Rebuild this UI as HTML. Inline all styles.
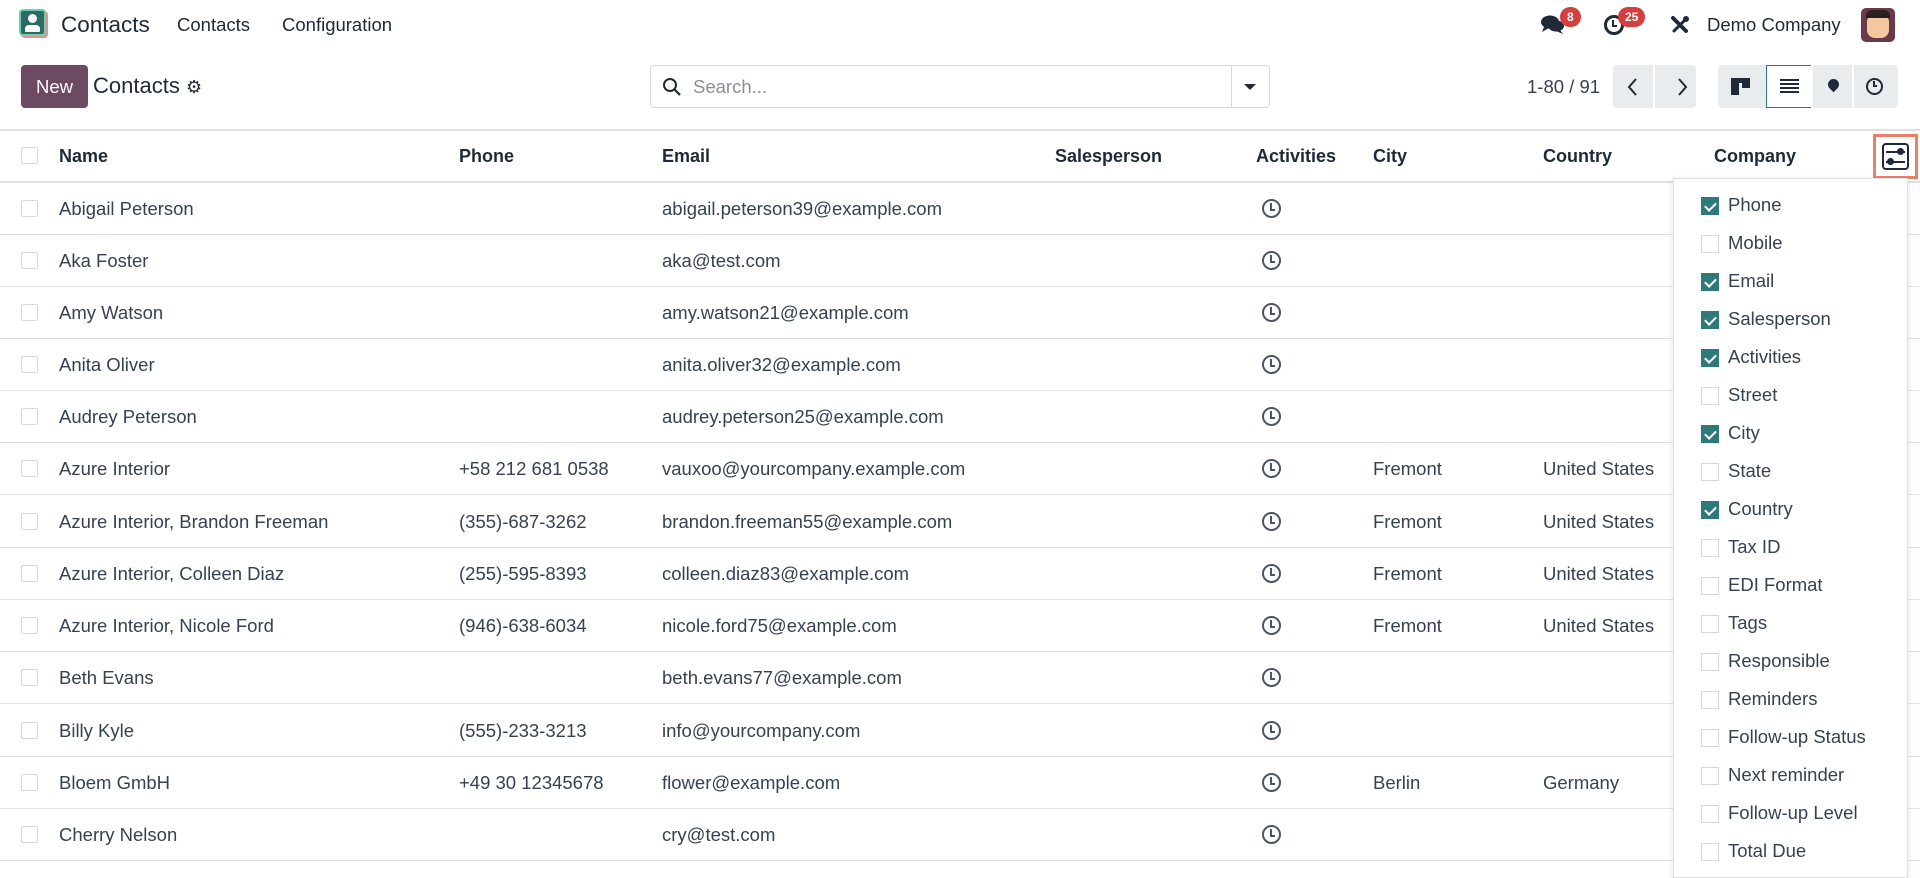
<!DOCTYPE html>
<html><head><meta charset="utf-8"><style>
*{box-sizing:border-box;margin:0;padding:0}
body{width:1920px;height:872px;overflow:hidden;background:#fff;font-family:"Liberation Sans",sans-serif;color:#374151;position:relative}
.a{position:absolute;white-space:nowrap}
.cb{position:absolute;width:17px;height:17px;border:1px solid #d6d8dc;background:#fff;border-radius:2px}
.row{position:absolute;left:0;width:1920px;height:52px;border-bottom:1px solid #dee2e6}
.row span{position:absolute;top:15px;font-size:18.5px;color:#374151;white-space:nowrap}
.clk{position:absolute;left:1262px;top:16px;width:19px;height:19px;border:2.5px solid #4b5563;border-radius:50%}
.clk:after{content:"";position:absolute;left:6px;top:2px;width:3px;height:6px;border-left:2px solid #4b5563;border-bottom:2px solid #4b5563}
.hd{position:absolute;top:146px;font-size:18px;font-weight:bold;color:#1f2937}
.dd{position:absolute;left:1673px;top:178px;width:235px;height:700px;background:#fff;border:1px solid #dee2e6;box-shadow:0 2px 6px rgba(0,0,0,.12)}
.it{position:absolute;left:54px;font-size:18.5px;color:#374151;white-space:nowrap}
.it i{position:absolute;left:-27px;top:1px;width:18px;height:18px;border:1px solid #d6d8dc;background:#fff}
.it i.on{background:#2e7a7a;border-color:#2e7a7a}
.it i.on:after{content:"";position:absolute;left:5px;top:2px;width:5px;height:9px;border-right:2.5px solid #fff;border-bottom:2.5px solid #fff;transform:rotate(45deg)}
.it b{font-weight:normal;position:absolute;left:0;top:-2px;white-space:nowrap}
.btn{position:absolute;background:#e9ecef;top:65px;height:43px}
</style></head><body>
<div class="a" style="left:21px;top:11px;width:27px;height:27px;background:#f08c8c;border-radius:4px"></div>
<div class="a" style="left:19px;top:9px;width:27px;height:27px;background:#2b6b63;border-radius:4px;border:2px solid #6ccfb4"></div>
<div class="a" style="left:28px;top:14px;width:9px;height:9px;background:#fff;border-radius:50%"></div>
<div class="a" style="left:25px;top:25px;width:15px;height:7px;background:#fff;border-radius:4px 4px 1px 1px"></div>
<div class="a" style="left:61px;top:12px;font-size:22.5px;color:#1f2937">Contacts</div>
<div class="a" style="left:177px;top:14px;font-size:18.5px;color:#1f2937">Contacts</div>
<div class="a" style="left:282px;top:14px;font-size:18.5px;color:#1f2937">Configuration</div>
<svg class="a" style="left:1540px;top:14px" width="26" height="22" viewBox="0 0 26 22"><ellipse cx="10" cy="8" rx="9" ry="6.5" fill="#1f2937"/><path d="M4 13 L2 18 L9 14Z" fill="#1f2937"/><ellipse cx="16" cy="12" rx="8" ry="5.5" fill="#1f2937"/><path d="M20 16 L23 20 L16 17Z" fill="#1f2937"/></svg>
<div class="a" style="left:1560px;top:7px;background:#d43f3f;color:#fff;font-size:12px;font-weight:bold;border-radius:10px;padding:3px 7px">8</div>
<div class="a" style="left:1604px;top:15px;width:20px;height:20px;border:3px solid #1f2937;border-radius:50%"></div>
<div class="a" style="left:1612px;top:20px;width:5px;height:7px;border-left:2px solid #1f2937;border-bottom:2px solid #1f2937"></div>
<div class="a" style="left:1618px;top:7px;background:#d43f3f;color:#fff;font-size:12px;font-weight:bold;border-radius:10px;padding:3px 7px">25</div>
<svg class="a" style="left:1669px;top:14px" width="22" height="22" viewBox="0 0 22 22"><path d="M5 17 L17 5" stroke="#1f2937" stroke-width="3" stroke-linecap="round"/><path d="M4 4 L17 17" stroke="#1f2937" stroke-width="4" stroke-linecap="round"/><circle cx="17" cy="5" r="3" fill="#1f2937"/></svg>
<div class="a" style="left:1707px;top:14px;font-size:18.5px;color:#1f2937">Demo Company</div>
<div class="a" style="left:1861px;top:8px;width:34px;height:34px;background:#6b3a4a;border-radius:5px"></div>
<div class="a" style="left:1867px;top:14px;width:22px;height:24px;background:#f3c7a0;border-radius:8px"></div>
<div class="a" style="left:1866px;top:10px;width:24px;height:8px;background:#2b1f1f;border-radius:6px 6px 0 0"></div>
<div class="a" style="left:21px;top:65px;width:67px;height:43px;background:#6b4a62;border-radius:4px;color:#fff;font-size:18.5px;text-align:center;line-height:43px">New</div>
<div class="a" style="left:93px;top:73px;font-size:22px;color:#1f2937">Contacts <span style="font-size:18px">⚙</span></div>
<div class="a" style="left:650px;top:65px;width:620px;height:43px;border:1px solid #d6d8dc;border-radius:4px"></div>
<svg class="a" style="left:662px;top:77px" width="20" height="20" viewBox="0 0 20 20"><circle cx="8" cy="8" r="6" fill="none" stroke="#1f2937" stroke-width="2"/><path d="M12.5 12.5 L18 18" stroke="#1f2937" stroke-width="2.2"/></svg>
<div class="a" style="left:693px;top:76px;font-size:18.5px;color:#8a8f96">Search...</div>
<div class="a" style="left:1231px;top:66px;width:1px;height:41px;background:#d6d8dc"></div>
<div class="a" style="left:1244px;top:84px;border-left:6px solid transparent;border-right:6px solid transparent;border-top:6px solid #1f2937"></div>
<div class="a" style="left:1527px;top:76px;font-size:18.5px;color:#374151">1-80 / 91</div>
<div class="btn" style="left:1613px;width:40px;border-radius:4px 0 0 4px"></div>
<div class="btn" style="left:1655px;width:41px;border-radius:0 4px 4px 0"></div>
<svg class="a" style="left:1624px;top:76px" width="70" height="22"><path d="M12 3 L5 11 L12 19" fill="none" stroke="#1f2937" stroke-width="2"/><path d="M55 3 L62 11 L55 19" fill="none" stroke="#1f2937" stroke-width="2"/></svg>
<div class="btn" style="left:1718px;width:180px;border-radius:4px"></div>
<div class="a" style="left:1766px;top:65px;width:47px;height:43px;background:#fff;border:1px solid #2e7a7a"></div>
<div class="a" style="left:1852px;top:65px;width:2px;height:43px;background:#fff"></div>
<div class="a" style="left:1811px;top:65px;width:2px;height:43px;background:#fff"></div>
<div class="a" style="left:1731px;top:78px;width:19px;height:5px;background:#1f2937"></div>
<div class="a" style="left:1731px;top:78px;width:8px;height:17px;background:#1f2937"></div>
<div class="a" style="left:1742px;top:78px;width:8px;height:10px;background:#1f2937"></div>
<div class="a" style="left:1780px;top:79px;width:19px;height:15px;background:repeating-linear-gradient(#1f2937 0 2px,#fff 2px 4px)"></div>
<div class="a" style="left:1828px;top:79px;width:11px;height:11px;background:#1f2937;border-radius:50% 50% 50% 0;transform:rotate(-45deg)"></div>
<div class="a" style="left:1866px;top:78px;width:17px;height:17px;border:2.5px solid #1f2937;border-radius:50%"></div>
<div class="a" style="left:1873px;top:81px;width:4px;height:6px;border-left:2px solid #1f2937;border-bottom:2px solid #1f2937"></div>
<div class="a" style="left:0;top:129px;width:1920px;height:2px;background:#dee2e6"></div>
<div class="a" style="left:0;top:181px;width:1920px;height:2px;background:#dee2e6"></div>
<div class="cb" style="left:21px;top:147px"></div>
<div class="hd" style="left:59px">Name</div>
<div class="hd" style="left:459px">Phone</div>
<div class="hd" style="left:662px">Email</div>
<div class="hd" style="left:1055px">Salesperson</div>
<div class="hd" style="left:1256px">Activities</div>
<div class="hd" style="left:1373px">City</div>
<div class="hd" style="left:1543px">Country</div>
<div class="hd" style="left:1714px">Company</div>
<div class="a" style="left:1873px;top:134px;width:45px;height:45px;border:3px solid #e8806a"></div>
<div class="a" style="left:1882px;top:143px;width:27px;height:27px;border:2px solid #1f2937;border-radius:4px"></div>
<div class="a" style="left:1886px;top:151px;width:19px;height:2px;background:#1f2937"></div>
<div class="a" style="left:1886px;top:161px;width:19px;height:2px;background:#1f2937"></div>
<div class="a" style="left:1897px;top:148px;width:7px;height:7px;border-radius:50%;background:#1f2937"></div>
<div class="a" style="left:1887px;top:158px;width:7px;height:7px;border-radius:50%;background:#1f2937"></div>
<div class="row" style="top:183px"><div class="cb" style="left:21px;top:17px"></div><span style="left:59px">Abigail Peterson</span><span style="left:662px">abigail.peterson39@example.com</span><div class="clk"></div></div>
<div class="row" style="top:235px"><div class="cb" style="left:21px;top:17px"></div><span style="left:59px">Aka Foster</span><span style="left:662px">aka@test.com</span><div class="clk"></div></div>
<div class="row" style="top:287px"><div class="cb" style="left:21px;top:17px"></div><span style="left:59px">Amy Watson</span><span style="left:662px">amy.watson21@example.com</span><div class="clk"></div></div>
<div class="row" style="top:339px"><div class="cb" style="left:21px;top:17px"></div><span style="left:59px">Anita Oliver</span><span style="left:662px">anita.oliver32@example.com</span><div class="clk"></div></div>
<div class="row" style="top:391px"><div class="cb" style="left:21px;top:17px"></div><span style="left:59px">Audrey Peterson</span><span style="left:662px">audrey.peterson25@example.com</span><div class="clk"></div></div>
<div class="row" style="top:443px"><div class="cb" style="left:21px;top:17px"></div><span style="left:59px">Azure Interior</span><span style="left:459px">+58 212 681 0538</span><span style="left:662px">vauxoo@yourcompany.example.com</span><div class="clk"></div><span style="left:1373px">Fremont</span><span style="left:1543px">United States</span></div>
<div class="row" style="top:496px"><div class="cb" style="left:21px;top:17px"></div><span style="left:59px">Azure Interior, Brandon Freeman</span><span style="left:459px">(355)-687-3262</span><span style="left:662px">brandon.freeman55@example.com</span><div class="clk"></div><span style="left:1373px">Fremont</span><span style="left:1543px">United States</span></div>
<div class="row" style="top:548px"><div class="cb" style="left:21px;top:17px"></div><span style="left:59px">Azure Interior, Colleen Diaz</span><span style="left:459px">(255)-595-8393</span><span style="left:662px">colleen.diaz83@example.com</span><div class="clk"></div><span style="left:1373px">Fremont</span><span style="left:1543px">United States</span></div>
<div class="row" style="top:600px"><div class="cb" style="left:21px;top:17px"></div><span style="left:59px">Azure Interior, Nicole Ford</span><span style="left:459px">(946)-638-6034</span><span style="left:662px">nicole.ford75@example.com</span><div class="clk"></div><span style="left:1373px">Fremont</span><span style="left:1543px">United States</span></div>
<div class="row" style="top:652px"><div class="cb" style="left:21px;top:17px"></div><span style="left:59px">Beth Evans</span><span style="left:662px">beth.evans77@example.com</span><div class="clk"></div></div>
<div class="row" style="top:705px"><div class="cb" style="left:21px;top:17px"></div><span style="left:59px">Billy Kyle</span><span style="left:459px">(555)-233-3213</span><span style="left:662px">info@yourcompany.com</span><div class="clk"></div></div>
<div class="row" style="top:757px"><div class="cb" style="left:21px;top:17px"></div><span style="left:59px">Bloem GmbH</span><span style="left:459px">+49 30 12345678</span><span style="left:662px">flower@example.com</span><div class="clk"></div><span style="left:1373px">Berlin</span><span style="left:1543px">Germany</span></div>
<div class="row" style="top:809px"><div class="cb" style="left:21px;top:17px"></div><span style="left:59px">Cherry Nelson</span><span style="left:662px">cry@test.com</span><div class="clk"></div></div>
<div class="dd">
<div class="it" style="top:17px"><i class="on"></i><b>Phone</b></div>
<div class="it" style="top:55px"><i></i><b>Mobile</b></div>
<div class="it" style="top:93px"><i class="on"></i><b>Email</b></div>
<div class="it" style="top:131px"><i class="on"></i><b>Salesperson</b></div>
<div class="it" style="top:169px"><i class="on"></i><b>Activities</b></div>
<div class="it" style="top:207px"><i></i><b>Street</b></div>
<div class="it" style="top:245px"><i class="on"></i><b>City</b></div>
<div class="it" style="top:283px"><i></i><b>State</b></div>
<div class="it" style="top:321px"><i class="on"></i><b>Country</b></div>
<div class="it" style="top:359px"><i></i><b>Tax ID</b></div>
<div class="it" style="top:397px"><i></i><b>EDI Format</b></div>
<div class="it" style="top:435px"><i></i><b>Tags</b></div>
<div class="it" style="top:473px"><i></i><b>Responsible</b></div>
<div class="it" style="top:511px"><i></i><b>Reminders</b></div>
<div class="it" style="top:549px"><i></i><b>Follow-up Status</b></div>
<div class="it" style="top:587px"><i></i><b>Next reminder</b></div>
<div class="it" style="top:625px"><i></i><b>Follow-up Level</b></div>
<div class="it" style="top:663px"><i></i><b>Total Due</b></div>
</div>
</body></html>
